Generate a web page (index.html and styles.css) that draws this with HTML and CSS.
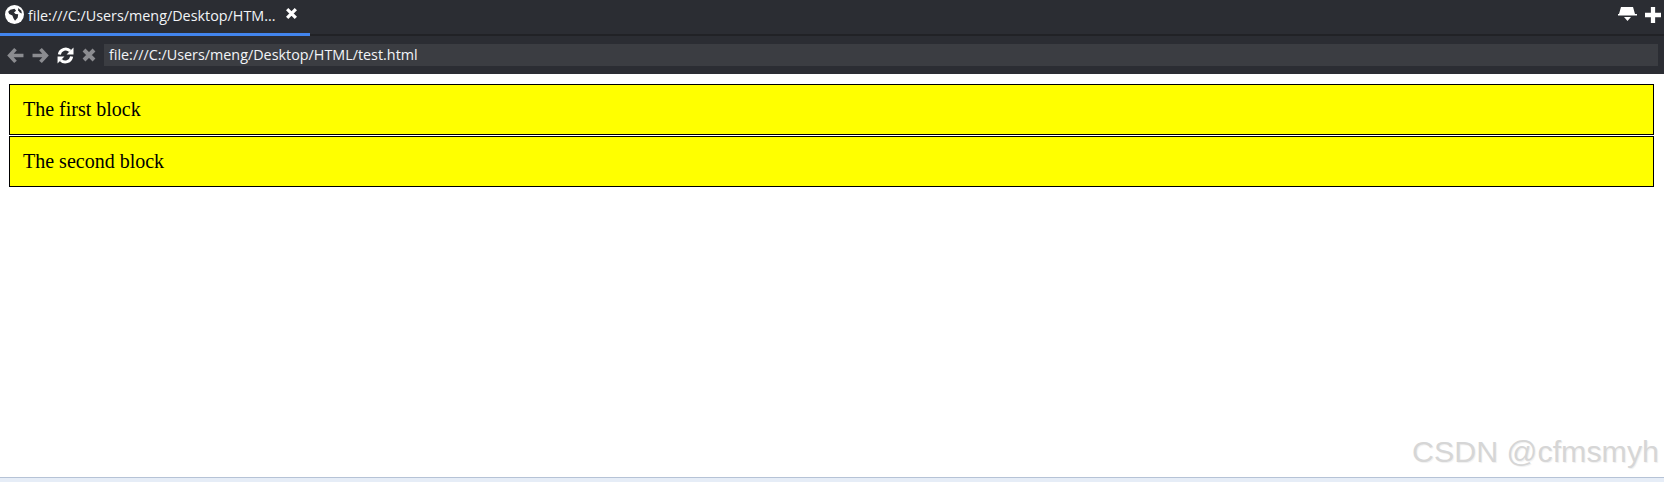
FILE: index.html

```html
<!DOCTYPE html>
<html lang="en">
<head>
  <meta charset="UTF-8">
  <title>test.html</title>
  <link rel="stylesheet" href="styles.css">
</head>
<body>

  <header class="chrome">
    <div class="tab-bar">
      <div class="tab">
        <svg class="globe" width="19" height="19" viewBox="0 0 18 18">
          <circle cx="9" cy="9" r="9" fill="#fff"/>
          <path d="M5 4.5 L9 3.5 L10.5 5.5 L8.5 7 L10 8.5 L12.5 8.8 L12 12 L9.5 15 L8 12.5 L7 10 L4 8.5 L3 6.5 Z" fill="#2b2d33"/>
          <path d="M12.5 2.8 L15.5 5.5 L16 8 L14 7 L12.5 5 Z" fill="#2b2d33"/>
        </svg>
        <span class="tab-title">file:///C:/Users/meng/Desktop/HTM...</span>
        <svg class="tab-close" width="13" height="13" viewBox="0 0 12 12">
          <path d="M2 2 L10 10 M10 2 L2 10" stroke="#fff" stroke-width="3"/>
        </svg>
      </div>
      <div class="tab-actions">
        <svg width="19" height="16" viewBox="0 0 19 16">
          <path d="M3 0 H15 L17 7 H1 Z" fill="#fff"/>
          <rect x="0" y="7" width="19" height="1.5" fill="#fff"/>
          <path d="M6 10 H13 L9.5 14 Z" fill="#fff"/>
        </svg>
        <svg width="16" height="16" viewBox="0 0 15 15">
          <path d="M7.5 0 V15 M0 7.5 H15" stroke="#fff" stroke-width="4"/>
        </svg>
      </div>
    </div>
    <div class="nav-bar">
      <svg class="nav-icon" width="17" height="17" viewBox="0 0 16 16">
        <path d="M8 2 L2.5 8 L8 14 M3 8 H15.5" fill="none" stroke="#8b8c90" stroke-width="3.4"/>
      </svg>
      <svg class="nav-icon" width="17" height="17" viewBox="0 0 16 16">
        <path d="M8 2 L13.5 8 L8 14 M13 8 H0.5" fill="none" stroke="#8b8c90" stroke-width="3.4"/>
      </svg>
      <svg class="nav-icon" width="17" height="17" viewBox="0 0 16 16">
        <path d="M2.2 7 A6 6 0 0 1 12.5 3.8" fill="none" stroke="#fff" stroke-width="2.8"/>
        <path d="M15.5 0.5 V7 H9 Z" fill="#fff"/>
        <path d="M13.8 9 A6 6 0 0 1 3.5 12.2" fill="none" stroke="#fff" stroke-width="2.8"/>
        <path d="M0.5 15.5 V9 H7 Z" fill="#fff"/>
      </svg>
      <svg class="nav-icon" width="14" height="14" viewBox="0 0 14 14">
        <path d="M2 2 L12 12 M12 2 L2 12" stroke="#8b8c90" stroke-width="4"/>
      </svg>
      <div class="address">file:///C:/Users/meng/Desktop/HTML/test.html</div>
    </div>
  </header>

  <main class="page">
    <div class="block">The first block</div>
    <div class="block">The second block</div>
  </main>

  <div class="watermark">CSDN @cfmsmyh</div>
  <div class="bottom-strip"></div>

</body>
</html>
```

FILE: styles.css

```css
html, body {
  height: 100%;
}
body {
  margin: 0;
  display: flex;
  flex-direction: column;
  height: 482px;
  overflow: hidden;
  position: relative;
  background-color: #fff;
}
.chrome {
  background-color: #2b2d33;
  font-family: "Open Sans", "Noto Sans", sans-serif;
  color: #f2f4f7;
  font-size: 14.35px;
}
.tab-bar {
  height: 34px;
  display: flex;
  justify-content: space-between;
  border-bottom: 2px solid #212226;
}
.tab {
  width: 310px;
  height: 36px;
  box-sizing: border-box;
  border-bottom: 3px solid #4285ee;
  display: flex;
  align-items: center;
  padding-left: 5px;
}
.globe {
  margin-top: -5px;
}
.tab-title {
  margin-left: 4px;
  margin-top: -2px;
}
.tab-close {
  margin-left: 9px;
  margin-top: -6px;
}
.tab-actions {
  display: flex;
  gap: 8px;
  align-items: center;
  padding-right: 3px;
  padding-top: 2px;
  height: 26px;
}
.nav-bar {
  height: 38px;
  display: flex;
  align-items: center;
  padding-left: 7px;
  gap: 8px;
}
.nav-icon {
  flex: none;
}
.address {
  flex: 1;
  height: 22px;
  line-height: 21px;
  margin-right: 6px;
  padding-left: 5px;
  background-color: #3b3d42;
}
.page {
  flex: 1;
  padding: 10px 10px 0 9px;
  font-family: "Liberation Serif", serif;
  font-size: 20px;
}
.block {
  background-color: #ff0;
  border: 1px solid #000;
  padding: 13px;
  height: 23px;
  margin-bottom: 1px;
  color: #000;
}
.watermark {
  position: absolute;
  right: 5px;
  bottom: 13px;
  font-family: "Liberation Sans", sans-serif;
  font-size: 30.4px;
  color: #d6d6d6;
  text-shadow: 1px 1px 1px #f0f0f0;
}
.bottom-strip {
  height: 5px;
  background-color: #e6edf7;
  border-top: 1px solid #b6c3d6;
  box-sizing: border-box;
}
```
